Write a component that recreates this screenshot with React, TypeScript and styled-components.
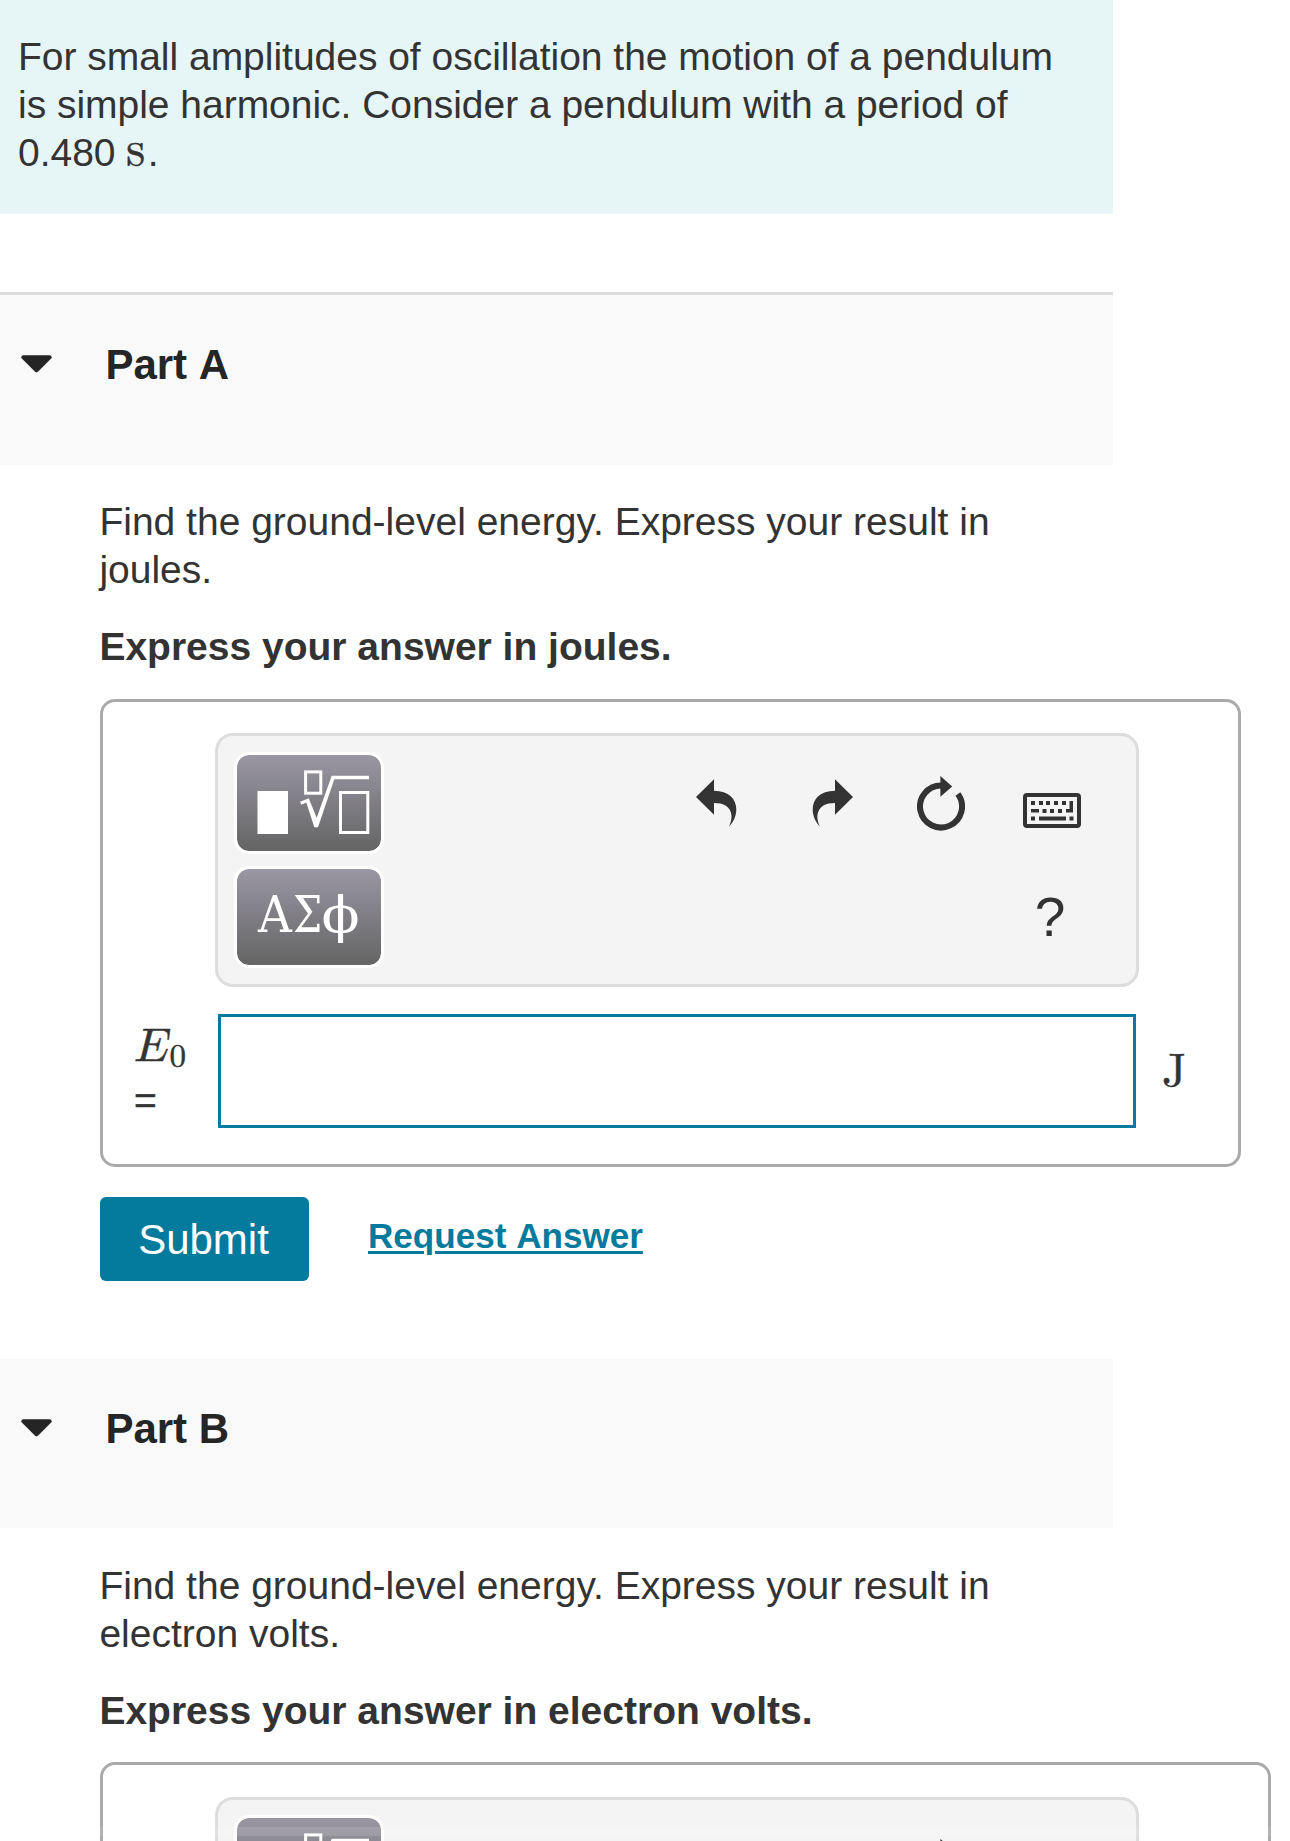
import React from 'react';
import styled, { createGlobalStyle } from 'styled-components';

const GlobalStyle = createGlobalStyle`
  * { box-sizing: border-box; }
  body {
    margin: 0;
    background: #fff;
    color: #333;
    font-family: "Liberation Sans", Arial, Helvetica, sans-serif;
    font-size: 39px;
    line-height: 48px;
  }
`;

const Page = styled.main`
  position: relative;
  width: 1290px;
  height: 1841px;
  overflow: hidden;
  background: #fff;
`;

const Intro = styled.section`
  width: 1113px;
  height: 214px;
  padding: 33px 18px 0;
  background: #e6f6f7;
  letter-spacing: -0.02px;
  white-space: nowrap;
`;

const Unit = styled.span`
  font-family: "Latin Modern Roman", "Liberation Serif", serif;
  font-size: 48px;
  line-height: 1px;
  letter-spacing: 2.5px;
  vertical-align: 1px;
  -webkit-text-stroke: 0.5px #333;
`;

const PartHeader = styled.header<{ $ruled?: boolean; $gap: number }>`
  display: flex;
  align-items: flex-start;
  width: 1113px;
  height: ${p => (p.$ruled ? 173 : 169)}px;
  margin-top: ${p => p.$gap}px;
  padding: 45px 0 0 21px;
  border-top: ${p => (p.$ruled ? '3px solid #ddd' : 'none')};
  background: #f9f9f9;
`;

const Caret = styled.svg`
  width: 31px;
  height: 18px;
  margin-top: 15px;
`;

const PartTitle = styled.h2`
  margin: 1px 0 0 53.4px;
  color: #252525;
  font-size: 42px;
  font-weight: 700;
  font-kerning: none;
  line-height: 48px;
`;

const PartBody = styled.div<{ $low?: boolean }>`
  padding: ${p => (p.$low ? 34 : 33)}px 0 0 100px;
`;

const Question = styled.p`
  margin: 0 0 0 -0.6px;
  white-space: nowrap;
`;

const Instruction = styled.p<{ $low?: boolean }>`
  margin: 29px 0 ${p => (p.$low ? 27 : 28)}px -0.6px;
  font-weight: 700;
`;

const AnswerBox = styled.div<{ $width: number }>`
  width: ${p => p.$width}px;
  height: 468px;
  padding: 31px 0 0 12px;
  border: 3px solid #aaa;
  border-radius: 15px;
`;

const Toolbar = styled.div<{ $low?: boolean }>`
  display: flex;
  justify-content: space-between;
  width: 924px;
  height: 254px;
  margin: ${p => (p.$low ? 1 : 0)}px 0 0 100px;
  padding: ${p => (p.$low ? 15 : 16)}px 55px 0 16px;
  border: 3px solid #ddd;
  border-radius: 18px;
  background: #f4f4f4;
`;

const Palettes = styled.div`
  display: flex;
  flex-direction: column;
  gap: 12px;
`;

const PaletteButton = styled.button`
  display: block;
  width: 150px;
  height: 102px;
  padding: 0;
  border: 3px solid #fff;
  border-radius: 15px;
  background: linear-gradient(#9a97a3, #646464) padding-box;
  color: #fff;

  svg { display: block; }
`;

const GreekLetters = styled.span`
  display: flex;
  height: 96px;
  padding-left: 21px;
  font-family: "DejaVu Serif Condensed", "DejaVu Serif", serif;
  font-stretch: condensed;
  font-size: 51px;
  line-height: 91px;
`;

const Letter = styled.span<{ $width: number; $stretch: number }>`
  display: flex;
  flex: none;
  justify-content: center;
  width: ${p => p.$width}px;
  transform: scaleX(${p => p.$stretch});
`;

const Tools = styled.div`
  display: grid;
  grid-template-columns: 117px 105px 106px 58px;
  grid-template-rows: 54px 60px;
  row-gap: 58px;
  padding-top: 22px;
  color: #333;

  svg { display: block; }
`;

const Help = styled.span`
  grid-column: 4;
  padding-right: 4px;
  font-size: 55px;
  line-height: 62px;
  text-align: center;
`;

const AnswerRow = styled.div`
  display: flex;
  margin-top: 27px;
`;

const Symbol = styled.div`
  width: 103px;
  padding: 6px 0 0 19px;
`;

const MathSymbol = styled.div`
  height: 57px;
  font-family: "Latin Modern Math", "Liberation Serif", serif;
  font-size: 47px;
  line-height: 54px;
  white-space: nowrap;
  -webkit-text-stroke: 0.5px #333;

  sub {
    position: relative;
    top: 6px;
    margin-left: 3.5px;
    font-size: 33px;
    line-height: 0;
    vertical-align: baseline;
  }
`;

const Equals = styled.div`
  -webkit-text-stroke: 0.5px #333;
`;

const AnswerInput = styled.input`
  width: 918px;
  height: 114px;
  padding: 0 12px;
  border: 3px solid #047a9c;
  border-radius: 0;
  outline: none;
  background: #fff;
  font: inherit;
`;

const AnswerUnit = styled.span`
  padding-left: 26px;
  font-family: "Latin Modern Roman", "Liberation Serif", serif;
  font-size: 47px;
  line-height: 106px;
  -webkit-text-stroke: 0.5px #333;
`;

const Actions = styled.div`
  display: flex;
  align-items: flex-start;
  margin-top: 30px;
`;

const Submit = styled.button`
  width: 209px;
  height: 84px;
  padding: 2px 2px 0 0;
  border: 0;
  border-radius: 6px;
  background: #047a9c;
  color: #fff;
  font-family: inherit;
  font-size: 42px;
  line-height: 80px;
`;

const RequestLink = styled.a`
  margin: 15px 0 0 59px;
  color: #047a9c;
  font-size: 35.1px;
  font-weight: 700;
  font-kerning: none;
  line-height: 48px;
  text-decoration: underline;
  text-decoration-thickness: 3px;
  text-underline-offset: 3px;
`;

const BottomGlare = styled.div`
  position: absolute;
  right: 0;
  bottom: 0;
  left: 0;
  height: 14px;
  background: linear-gradient(rgba(255, 255, 255, 0.12) 9px, rgba(255, 255, 255, 0) 9px);
  pointer-events: none;
`;

const CaretIcon = () => (
  <Caret viewBox="0 0 31 18" fill="#252525">
    <path d="M2 0.3H29Q31 1 30.7 3L17.2 16.6Q15.5 18.2 13.8 16.6L0.3 3Q0 1 2 .3Z" />
  </Caret>
);

const RootIcon = () => (
  <svg width="144" height="96" viewBox="0 0 144 96" fill="none" stroke="#fff" strokeWidth="3">
    <rect x="20.5" y="36" width="30.5" height="43" fill="#fff" stroke="none" />
    <rect x="68.6" y="16.9" width="15.2" height="21.3" />
    <rect x="103.5" y="37.5" width="27.3" height="40" />
    <path
      d="M63 46.8L71.7 43.2L79.7 62.7L94.7 20.7H132V24.2H97.3L81 72.3H77.3L69.3 47.5L64.3 49.8Z"
      fill="#fff"
      stroke="none"
    />
  </svg>
);

const UndoIcon = ({ flipped = false }: { flipped?: boolean }) => (
  <svg width="42" height="54" viewBox="0 0 42 54" fill="currentColor">
    <path
      transform={flipped ? 'translate(42 0) scale(-1 1)' : undefined}
      d="M1 23L19 5.3V16.8C34 17 41.3 25 41.3 35.5C41.3 42 38 49 34 52.6C39 43 38 29 19 29V40.7Z"
    />
  </svg>
);

const ResetIcon = () => (
  <svg width="48" height="60" viewBox="0 0 48 60">
    <path d="M24 11.5A21 21 0 1 0 40.9 20" fill="none" stroke="currentColor" strokeWidth="6" />
    <path d="M23.4 2L35.2 12.4L23.4 22.8Z" fill="currentColor" />
  </svg>
);

const keys = [
  [8, 8, 4, 4], [16, 8, 4, 4], [23, 8, 4, 4], [31, 8, 4, 4], [39, 8, 4, 4],
  [8, 16, 8, 3.5], [19.5, 16, 4, 4], [27, 16, 4, 4], [35, 16, 4, 4],
  [8, 23.5, 4, 4], [16, 23.5, 27, 4], [46.5, 23.5, 4, 4],
];

const KeyboardSvg = styled.svg`
  margin-top: 19px;
`;

const KeyboardIcon = () => (
  <KeyboardSvg width="58" height="35" viewBox="0 0 58 35" fill="currentColor">
    <rect x="2" y="2" width="54" height="31" rx="2" fill="none" stroke="currentColor" strokeWidth="4" />
    {keys.map(([x, y, w, h]) => (
      <rect key={`${x}-${y}`} x={x} y={y} width={w} height={h} />
    ))}
    <path d="M46.5 8H50V19.5H43V16H46.5Z" />
  </KeyboardSvg>
);

const MathToolbar = ({ low }: { low?: boolean }) => (
  <Toolbar $low={low}>
    <Palettes>
      <PaletteButton aria-label="Templates"><RootIcon /></PaletteButton>
      {!low && (
        <PaletteButton aria-label="Symbols">
          <GreekLetters>
            <Letter $width={34} $stretch={1.02}>Α</Letter>
            <Letter $width={31} $stretch={0.9}>Σ</Letter>
            <Letter $width={35} $stretch={1.22}>ϕ</Letter>
          </GreekLetters>
        </PaletteButton>
      )}
    </Palettes>
    <Tools>
      <UndoIcon />
      <UndoIcon flipped />
      <ResetIcon />
      <KeyboardIcon />
      {!low && <Help>?</Help>}
    </Tools>
  </Toolbar>
);

const Answer = () => (
  <AnswerBox $width={1141}>
    <MathToolbar />
    <AnswerRow>
      <Symbol>
        <MathSymbol><i>E</i><sub>0</sub></MathSymbol>
        <Equals>=</Equals>
      </Symbol>
      <AnswerInput />
      <AnswerUnit>J</AnswerUnit>
    </AnswerRow>
  </AnswerBox>
);

export default function App() {
  return (
    <>
      <GlobalStyle />
      <Page>
        <Intro>
          For small amplitudes of oscillation the motion of a pendulum<br />
          is simple harmonic. Consider a pendulum with a period of<br />
          0.480 <Unit>s</Unit>.
        </Intro>

        <PartHeader $ruled $gap={78}>
          <CaretIcon />
          <PartTitle>Part A</PartTitle>
        </PartHeader>
        <PartBody>
          <Question>
            Find the ground-level energy. Express your result in<br />joules.
          </Question>
          <Instruction>Express your answer in joules.</Instruction>
          <Answer />
          <Actions>
            <Submit>Submit</Submit>
            <RequestLink>Request Answer</RequestLink>
          </Actions>
        </PartBody>

        <PartHeader $gap={78}>
          <CaretIcon />
          <PartTitle>Part B</PartTitle>
        </PartHeader>
        <PartBody $low>
          <Question>
            Find the ground-level energy. Express your result in<br />electron volts.
          </Question>
          <Instruction $low>Express your answer in electron volts.</Instruction>
          <AnswerBox $width={1171}>
            <MathToolbar low />
          </AnswerBox>
        </PartBody>
        <BottomGlare />
      </Page>
    </>
  );
}
